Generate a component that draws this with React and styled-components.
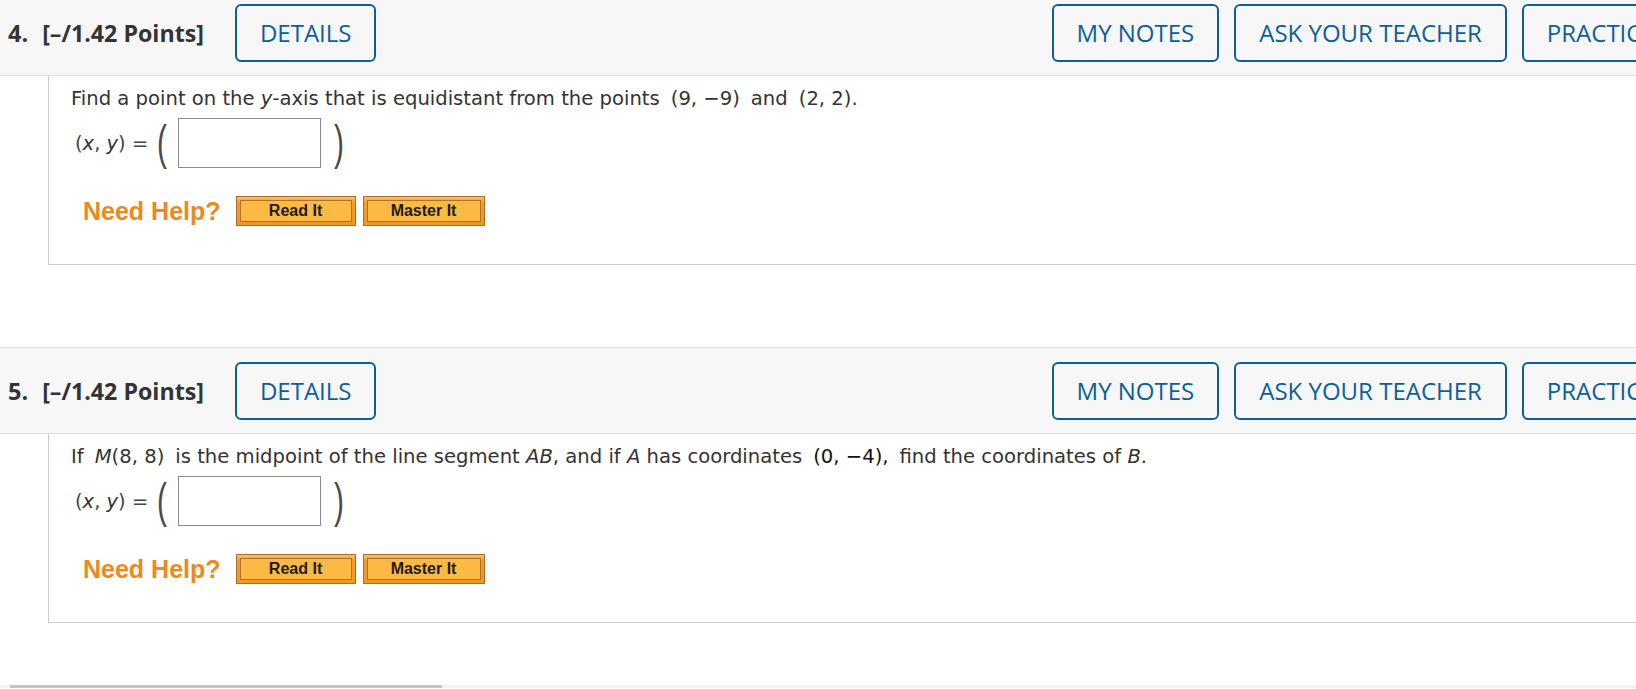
import React from "react";
import styled, { createGlobalStyle } from "styled-components";

const Global = createGlobalStyle`
  html, body { margin: 0; padding: 0; background: #fff; overflow: hidden; }
  body { height: 689px; }
`;

const Page = styled.div`
  width: 1797px;
  margin-top: -11px;
  display: flex;
  flex-direction: column;
`;

const Section = styled.section`
  display: flex;
  flex-direction: column;
  margin-bottom: ${(p) => (p.$last ? "62px" : "82px")};
`;

const Header = styled.div`
  display: flex;
  align-items: center;
  height: 85px;
  padding-left: 8px;
  background: #f7f7f7;
  border-top: 1px solid #dcdcdc;
  border-bottom: 1px solid #dcdcdc;
  font-family: "Open Sans", sans-serif;
`;

const Num = styled.span`
  font-size: 23.5px;
  font-weight: 700;
  color: #333;
  margin-right: 14px;
`;

const Points = styled.span`
  font-size: 23.2px;
  font-weight: 700;
  color: #333;
  margin-right: 31px;
`;

const RightGroup = styled.div`
  display: flex;
  gap: 15px;
  margin-left: auto;
`;

const OutlineButton = styled.button`
  box-sizing: border-box;
  height: 58px;
  padding: 0 23px;
  border: 2px solid #0b5f9b;
  border-radius: 6px;
  background: transparent;
  font-family: "Open Sans", sans-serif;
  font-size: 24px;
  font-weight: 400;
  color: #0b5f9b;
  white-space: nowrap;
  cursor: pointer;
`;

const QBox = styled.div`
  box-sizing: border-box;
  height: 189px;
  margin-left: 48px;
  padding: 11px 0 0 22px;
  border-left: 1px solid #cccccc;
  border-bottom: 1px solid #cccccc;
  font-family: "DejaVu Sans", Verdana, sans-serif;
  color: #333;
`;

const Question = styled.div`
  font-size: 19.6px;
  line-height: 24px;
  white-space: nowrap;
`;

const MathSpan = styled.span`
  margin: 0 ${(p) => (p.$tight ? "0" : "11px")} 0 11px;
  color: ${(p) => (p.$dark ? "#111" : "#333")};
`;

const Var = styled.i`
  font-style: italic;
  color: #333;
`;

const AnswerRow = styled.div`
  display: flex;
  align-items: center;
  height: 50px;
  margin-top: 7px;
  padding-left: 4px;
  font-size: 19.5px;
  color: #444;
`;

const Label = styled.span`
  white-space: nowrap;
  margin-right: 6px;
`;

const BigParen = styled.span`
  font-family: "Liberation Sans", Arial, sans-serif;
  font-size: 48px;
  font-weight: 400;
  line-height: 50px;
  color: #4a4a4a;
  transform: scaleX(0.62);
  margin: ${(p) => (p.$close ? "0 0 0 10px" : "0 8px 0 0")};
`;

const AnswerInput = styled.div`
  box-sizing: border-box;
  width: 143px;
  height: 50px;
  border: 1px solid #8a8a8a;
  background: #fff;
`;

const HelpRow = styled.div`
  display: flex;
  align-items: center;
  height: 30px;
  margin-top: 28px;
  padding-left: 12px;
  gap: 7px;
`;

const NeedHelp = styled.span`
  font-family: "Liberation Sans", Arial, sans-serif;
  font-size: 25px;
  font-weight: 700;
  color: #ef891d;
  margin-right: 8px;
  white-space: nowrap;
`;

const HelpButton = styled.button`
  box-sizing: border-box;
  width: ${(p) => p.$w}px;
  height: 30px;
  padding: 3px;
  border: 1px solid #ad6c2a;
  background: linear-gradient(#fbc06a 0%, #f79b27 20%, #f5951f 100%);
  cursor: pointer;
  display: flex;
`;

const HelpInner = styled.span`
  flex: 1;
  display: flex;
  align-items: center;
  justify-content: center;
  border: 1px solid #a9742f;
  background: #fcb943;
  font-family: "Liberation Sans", Arial, sans-serif;
  font-size: 16px;
  font-weight: 700;
  color: #1c1c1c;
`;

const Scrollbar = styled.div`
  height: 3px;
  background: #f1f1f1;
  display: flex;
`;

const Thumb = styled.div`
  margin-left: 10px;
  width: 432px;
  background: #c4c4c4;
`;

function QuestionBlock({ num, last, children }) {
  return (
    <Section $last={last}>
      <Header>
        <Num>{num}.</Num>
        <Points>[–/1.42 Points]</Points>
        <OutlineButton>DETAILS</OutlineButton>
        <RightGroup>
          <OutlineButton>MY NOTES</OutlineButton>
          <OutlineButton>ASK YOUR TEACHER</OutlineButton>
          <OutlineButton>PRACTICE ANOTHER</OutlineButton>
        </RightGroup>
      </Header>
      <QBox>
        <Question>{children}</Question>
        <AnswerRow>
          <Label>
            (<Var>x</Var>, <Var>y</Var>) =
          </Label>
          <BigParen>(</BigParen>
          <AnswerInput />
          <BigParen $close>)</BigParen>
        </AnswerRow>
        <HelpRow>
          <NeedHelp>Need Help?</NeedHelp>
          <HelpButton $w={120}>
            <HelpInner>Read It</HelpInner>
          </HelpButton>
          <HelpButton $w={122}>
            <HelpInner>Master It</HelpInner>
          </HelpButton>
        </HelpRow>
      </QBox>
    </Section>
  );
}

export default function App() {
  return (
    <>
      <Global />
      <Page>
        <QuestionBlock num={4}>
          Find a point on the <Var>y</Var>-axis that is equidistant from the points
          <MathSpan>(9, −9)</MathSpan>and<MathSpan $tight>(2, 2)</MathSpan>.
        </QuestionBlock>
        <QuestionBlock num={5} last>
          If<MathSpan>
            <Var>M</Var>(8, 8)
          </MathSpan>is the midpoint of the line segment <Var>AB</Var>, and if <Var>A</Var> has
          coordinates<MathSpan $dark>(0, −4),</MathSpan>find the coordinates of <Var>B</Var>.
        </QuestionBlock>
        <Scrollbar>
          <Thumb />
        </Scrollbar>
      </Page>
    </>
  );
}
